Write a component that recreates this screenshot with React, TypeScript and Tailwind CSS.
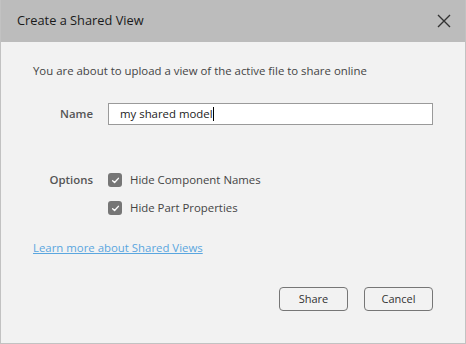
import React from 'react';

const CheckBox: React.FC = () => (
  <span className="w-[14px] h-[14px] rounded-[3px] bg-[#767676] flex items-center justify-center shrink-0">
    <svg width="9" height="9" viewBox="0 0 10 10" fill="none">
      <path d="M1.8 5.2 L4 7.3 L8.2 2.6" stroke="#fff" strokeWidth="1.5" strokeLinecap="round" strokeLinejoin="round" />
    </svg>
  </span>
);

const App: React.FC = () => {
  return (
    <div
      className="w-[466px] h-[344px] flex flex-col bg-[#f2f2f2] border border-t-0 border-[#c2c2c2] text-[11.4px] text-[#444]"
      style={{ fontFamily: '"Open Sans", sans-serif' }}
    >
      {/* Title bar */}
      <div className="h-[42px] bg-[#bcbcbc] flex items-center justify-between pl-[16px] pr-[14px] shrink-0">
        <span className="text-[12.8px] text-[#1a1a1a]">Create a Shared View</span>
        <svg width="14" height="14" viewBox="0 0 14 14">
          <path d="M1 1 L13 13 M13 1 L1 13" stroke="#333" strokeWidth="1.4" />
        </svg>
      </div>

      <div className="flex-1 flex flex-col px-[32px]">
        <p className="mt-[20px] leading-[18px]">You are about to upload a view of the active file to share online</p>

        <div className="flex items-center mt-[23px]">
          <span className="w-[60px] text-right font-semibold text-[#555]">Name</span>
          <div className="ml-[15px] w-[325px] h-[22px] bg-white border border-[#9a9a9a] flex items-center pl-[11px] text-[#222]">
            my shared model<span className="w-px h-[14px] bg-black" />
          </div>
        </div>

        <div className="flex mt-[46px]">
          <span className="w-[60px] text-right font-semibold text-[#555] leading-[18px]">Options</span>
          <div className="ml-[15px] flex flex-col gap-[10px]">
            <label className="flex items-center gap-[8px] leading-[18px]">
              <CheckBox />
              <span>Hide Component Names</span>
            </label>
            <label className="flex items-center gap-[8px] leading-[18px]">
              <CheckBox />
              <span>Hide Part Properties</span>
            </label>
          </div>
        </div>

        <a href="#" className="mt-[22px] text-[#5aa6df] underline leading-[18px] self-start">
          Learn more about Shared Views
        </a>

        <div className="flex justify-end gap-[16px] mt-[30px]">
          <button className="w-[69px] h-[24px] rounded-[4px] border border-[#767676] text-[#333] text-[11px]">Share</button>
          <button className="w-[69px] h-[24px] rounded-[4px] border border-[#767676] text-[#333] text-[11px]">Cancel</button>
        </div>
      </div>
    </div>
  );
};

export default App;
